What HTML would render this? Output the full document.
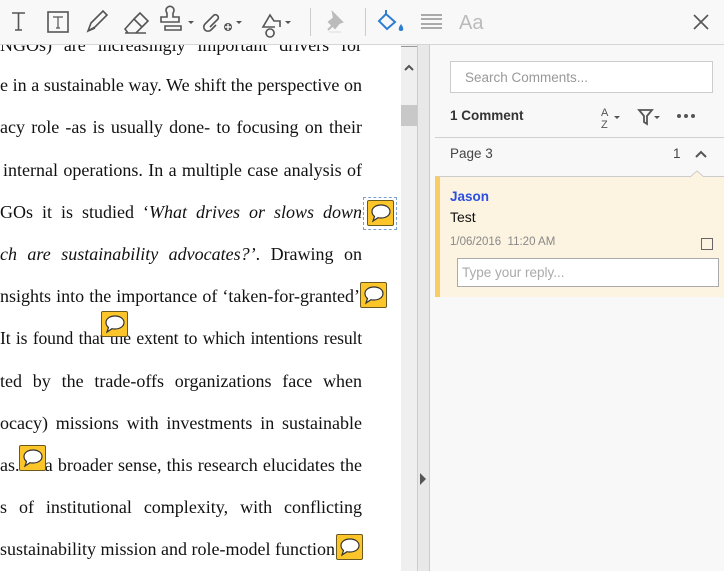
<!DOCTYPE html>
<html><head><meta charset="utf-8"><style>
*{margin:0;padding:0;box-sizing:border-box}
body{width:724px;height:571px;overflow:hidden;position:relative;background:#fff;font-family:"Liberation Sans",sans-serif}
#tb{position:absolute;left:0;top:0;width:724px;height:45px;background:#f8f8f8;border-bottom:1px solid #d6d6d6;z-index:5}
#tb svg{position:absolute}
#doc{position:absolute;left:0;top:45px;width:401px;height:526px;background:#fff;overflow:hidden}
.l{position:absolute;left:0;width:362px;font-family:"Liberation Serif",serif;font-size:18px;white-space:nowrap;text-align:justify;text-align-last:justify;color:#111;line-height:20px}
.ic{position:absolute;width:27px;height:26px;background:#fcc52a;border:1px solid #6b5a20;border-radius:2px}
.ic svg{position:absolute;left:2px;top:2px}
#sb{position:absolute;left:401px;top:45px;width:16px;height:526px;background:#efefef}
#dv{position:absolute;left:417px;top:45px;width:13px;height:526px;background:#e8e8e8;border-left:1px solid #ccc;border-right:1px solid #ccc}
#rp{position:absolute;left:430px;top:45px;width:294px;height:526px;background:#f8f8f8}
</style></head><body>
<div id="tb">
<svg width="724" height="45">
<g fill="none" stroke="#555" stroke-width="1.6">
<path d="M12 13h13M18.5 13v17M15 30h7"/>
<rect x="48" y="12" width="20" height="20"/>
<path d="M53 17h10M58 17v11M56 28h4" stroke-width="1.2"/>
<path d="M88 31l3-8 12-12 4 4-12 12zM88 31l7-3"/>
<path d="M125 29l9-10 8 8-6 6h-8zM134 19l6-6 8 8-6 6M125 33h21"/>
<path d="M167 13a4 4 0 1 1 6 0v4h6v5h-18v-5h6zM165 26h16v4h-16z"/>
<path d="M216 25l-5 5a4 4 0 0 1-6-6l9-9a3 3 0 0 1 4 4l-8 8"/>
<path d="M275 27h-12l7-12 4 6h6v6M270 29a4 4 0 1 0 0.1 0"/>
</g>
<circle cx="228" cy="27" r="4" fill="#555"/><path d="M228 24v6M225 27h6" stroke="#fff" stroke-width="1.4"/>
<path d="M188 21h6l-3 3zM236 21h6l-3 3zM285 21h6l-3 3z" fill="#555"/>
<line x1="310.5" y1="8" x2="310.5" y2="36" stroke="#ccc"/>
<line x1="365.5" y1="8" x2="365.5" y2="36" stroke="#ccc"/>
<path d="M333 13l9 9-3 1-4 5-6-6 5-4zM333 25l-5 5" stroke="#bbb" stroke-width="2" fill="#bbb"/>
<path d="M329 32h12" stroke="#ddd"/>
<path d="M386 10v5M386 14l-7 7 8 8 8-7z" stroke="#2d7dd2" stroke-width="2" fill="none"/>
<path d="M401 24c-3 4-3 7 0 7s3-3 0-7z" fill="#2d7dd2"/>
<path d="M421 15h21M421 19h21M421 24h21M421 28h21" stroke="#aaa" stroke-width="2"/>
<text x="459" y="29" font-family="Liberation Sans" font-size="20" fill="#bbb">Aa</text>
<path d="M694 15l14 14M708 15l-14 14" stroke="#555" stroke-width="1.6"/>
</svg>
</div>
<div id="doc">
<div class="l" style="top:-10px">NGOs) are increasingly important drivers for</div>
<div class="l" style="top:30px">e in a sustainable way. We shift the perspective on</div>
<div class="l" style="top:72px">acy role -as is usually done- to focusing on their</div>
<div class="l" style="top:115px;left:3px;width:359px">internal operations. In a multiple case analysis of</div>
<div class="l" style="top:157px">GOs it is studied ‘<i>What drives or slows down</i></div>
<div class="l" style="top:199px"><i>ch are sustainability advocates?’</i>. Drawing on</div>
<div class="l" style="top:241px;width:360px">nsights into the importance of ‘taken-for-granted’</div>
<div class="l" style="top:283px;font-size:17.6px;letter-spacing:-0.15px;word-spacing:-1px">It is found that the extent to which intentions result</div>
<div class="l" style="top:326px">ted by the trade-offs organizations face when</div>
<div class="l" style="top:368px">ocacy) missions with investments in sustainable</div>
<div class="l" style="top:410px">as. In a broader sense, this research elucidates the</div>
<div class="l" style="top:452px">s of institutional complexity, with conflicting</div>
<div class="l" style="top:494px;text-align:left;text-align-last:left">sustainability mission and role-model function</div>
<div style="position:absolute;left:363px;top:152px;width:34px;height:33px;border:1px dashed #7aa0d0"></div>
<div class="ic" style="left:367px;top:155px"><svg width="22" height="20"><path d="M11 2c5.5 0 9 3 9 6.5s-3.5 6.5-9 6.5c-1 0-2 0-3-.3L3 18l1.5-4.5C3 12.3 2 10.5 2 8.5 2 5 5.5 2 11 2z" fill="#fff" stroke="#333" stroke-width="1.2"/></svg></div>
<div class="ic" style="left:360px;top:237px"><svg width="22" height="20"><path d="M11 2c5.5 0 9 3 9 6.5s-3.5 6.5-9 6.5c-1 0-2 0-3-.3L3 18l1.5-4.5C3 12.3 2 10.5 2 8.5 2 5 5.5 2 11 2z" fill="#fff" stroke="#333" stroke-width="1.2"/></svg></div>
<div class="ic" style="left:101px;top:266px"><svg width="22" height="20"><path d="M11 2c5.5 0 9 3 9 6.5s-3.5 6.5-9 6.5c-1 0-2 0-3-.3L3 18l1.5-4.5C3 12.3 2 10.5 2 8.5 2 5 5.5 2 11 2z" fill="#fff" stroke="#333" stroke-width="1.2"/></svg></div>
<div class="ic" style="left:19px;top:400px"><svg width="22" height="20"><path d="M11 2c5.5 0 9 3 9 6.5s-3.5 6.5-9 6.5c-1 0-2 0-3-.3L3 18l1.5-4.5C3 12.3 2 10.5 2 8.5 2 5 5.5 2 11 2z" fill="#fff" stroke="#333" stroke-width="1.2"/></svg></div>
<div class="ic" style="left:336px;top:489px"><svg width="22" height="20"><path d="M11 2c5.5 0 9 3 9 6.5s-3.5 6.5-9 6.5c-1 0-2 0-3-.3L3 18l1.5-4.5C3 12.3 2 10.5 2 8.5 2 5 5.5 2 11 2z" fill="#fff" stroke="#333" stroke-width="1.2"/></svg></div>
</div>
<div id="sb">
<div style="position:absolute;left:0;top:0;width:16px;height:2px;border-bottom:1px solid #999"></div>
<svg width="16" height="30" style="position:absolute;left:0;top:10px"><path d="M4 15l4-4 4 4" stroke="#555" stroke-width="2" fill="none"/></svg>
<div style="position:absolute;left:0;top:60px;width:16px;height:21px;background:#c8c8c8"></div>
</div>
<div id="dv"><svg width="11" height="20" style="position:absolute;left:0;top:425px"><path d="M2 3l6 6-6 6z" fill="#555"/></svg></div>
<div id="rp">
<div style="position:absolute;left:20px;top:16px;width:263px;height:32px;background:#fff;border:1px solid #ccc;font-size:13.5px;color:#999;padding:8px 0 0 14px">Search Comments...</div>
<div style="position:absolute;left:20px;top:63px;font-size:13.5px;font-weight:bold;color:#333">1 Comment</div>
<svg width="120" height="24" style="position:absolute;left:165px;top:60px">
<text x="6" y="11" font-size="11" fill="#555" font-family="Liberation Sans">A</text>
<text x="6" y="23" font-size="11" fill="#555" font-family="Liberation Sans">Z</text>
<path d="M19 11h6l-3 3zM59 11h6l-3 3z" fill="#555"/>
<path d="M44 5h13l-5 6v8l-3-2v-6z" fill="none" stroke="#555" stroke-width="1.8"/>
<circle cx="84" cy="11" r="2" fill="#555"/><circle cx="91" cy="11" r="2" fill="#555"/><circle cx="98" cy="11" r="2" fill="#555"/>
</svg>
<div style="position:absolute;left:5px;top:92px;width:289px;height:1px;background:#d0d0d0"></div>
<div style="position:absolute;left:20px;top:101px;font-size:13.5px;color:#444">Page 3</div>
<div style="position:absolute;left:243px;top:101px;font-size:13.5px;color:#444">1</div>
<svg width="20" height="14" style="position:absolute;left:262px;top:103px"><path d="M4 9l5-5 5 5" stroke="#555" stroke-width="2" fill="none"/></svg>
<div style="position:absolute;left:5px;top:131px;width:289px;height:121px;background:#fcf3e0;border-top:1px solid #ccc;border-left:5px solid #f9cc66"></div>
<svg width="20" height="10" style="position:absolute;left:260px;top:125px"><path d="M0 7l7-6 7 6" fill="#fcf3e0" stroke="#ccc"/></svg>
<div style="position:absolute;left:20px;top:144px;font-size:13.5px;font-weight:bold;color:#2b4fe0">Jason</div>
<div style="position:absolute;left:20px;top:164px;font-size:14px;color:#111">Test</div>
<div style="position:absolute;left:20px;top:191px;font-size:11.5px;color:#888">1/06/2016&nbsp; 11:20 AM</div>
<div style="position:absolute;left:271px;top:193px;width:12px;height:12px;border:1px solid #666"></div>
<div style="position:absolute;left:27px;top:213px;width:262px;height:29px;background:#fff;border:1px solid #aaa;font-size:13.5px;color:#aaa;padding:6px 0 0 4px">Type your reply...</div>
</div>
</body></html>
